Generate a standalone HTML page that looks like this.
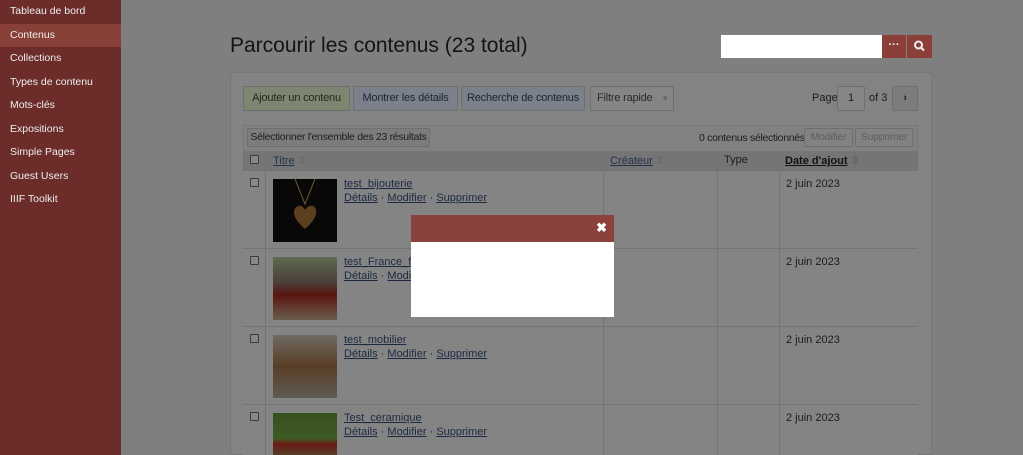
<!DOCTYPE html><html style="width:1023px;height:455px;overflow:hidden"><head><style>
*{margin:0;padding:0;box-sizing:border-box}
body{width:1023px;height:455px;overflow:hidden;background:#7f7f7f;font-family:"Liberation Sans",sans-serif;font-size:11px;color:#1c1c1c;position:relative;white-space:nowrap}
.a{position:absolute}
.side{left:0;top:0;width:121px;height:455px;background:#6b2c2a}
.side div{height:23.5px;line-height:23px;padding-left:10px;color:#eee;font-size:10.5px}
.side .on{background:#894039}
a{color:#1d2a42;text-decoration:underline}
.btn{border:1px solid #6f6f6f;border-radius:2px;line-height:23px;text-align:center;font-size:11px;letter-spacing:-0.2px}
.row{left:243px;width:675px;height:78px;border-top:1px solid #747474;background:#848484;overflow:hidden}
.cb{width:9px;height:9px;border:1px solid #3a3a3a;background:#888;border-radius:1px}
.v{top:0;height:78px;border-left:1px solid #747474}
.th{width:64px;height:63px;top:8px;left:30px}
.t{left:101px;top:6px;font-size:11px;line-height:14px}
</style></head><body>
<div class="a side">
<div>Tableau de bord</div><div class="on">Contenus</div><div>Collections</div><div>Types de contenu</div><div>Mots-clés</div><div>Expositions</div><div>Simple Pages</div><div>Guest Users</div><div>IIIF Toolkit</div>
</div>
<div class="a" style="left:230px;top:34px;font-size:21px;color:#141414">Parcourir les contenus (23 total)</div>
<div class="a" style="left:721px;top:35px;width:161px;height:23px;background:#fff"></div>
<div class="a" style="left:882px;top:35px;width:24px;height:23px;background:#8b3f38;color:#eee;text-align:center;line-height:21px;font-weight:bold">···</div>
<div class="a" style="left:907px;top:35px;width:25px;height:23px;background:#8b3f38"><svg width="25" height="23"><circle cx="11.5" cy="10" r="3.5" stroke="#eee" stroke-width="2" fill="none"/><path d="M14 12.5l3 3" stroke="#eee" stroke-width="2.2"/></svg></div>
<div class="a" style="left:230px;top:72px;width:702px;height:383px;background:#838383;border:1px solid #777"></div>
<div class="a btn" style="left:243px;top:86px;width:107px;height:25px;background:#7e8570;color:#1f2a12">Ajouter un contenu</div>
<div class="a btn" style="left:353px;top:86px;width:105px;height:25px;background:#7b808a;color:#1a2436">Montrer les détails</div>
<div class="a btn" style="left:461px;top:86px;width:124px;height:25px;background:#7b808a;color:#1a2436">Recherche de contenus</div>
<div class="a btn" style="left:590px;top:86px;width:84px;height:25px;background:#858585;text-align:left;padding-left:6px;color:#2a2a2a">Filtre rapide <span style="font-size:8px;color:#666;margin-left:6px">▼</span></div>
<div class="a" style="left:812px;top:92px">Page</div>
<div class="a btn" style="left:837px;top:86px;width:28px;height:25px;background:#868686">1</div>
<div class="a" style="left:869px;top:92px">of 3</div>
<div class="a btn" style="left:892px;top:86px;width:26px;height:25px;background:#7c7c7c;font-weight:bold">›</div>
<div class="a" style="left:243px;top:125px;width:675px;height:330px;border:1px solid #777;background:#818181"></div>
<div class="a btn" style="left:247px;top:128px;width:183px;height:19px;line-height:17px;background:#7c7c7c;font-size:10.5px;letter-spacing:-0.3px">Sélectionner l'ensemble des 23 résultats</div>
<div class="a" style="left:699px;top:132px;font-size:10.5px;letter-spacing:-0.3px">0 contenus sélectionnés</div>
<div class="a btn" style="left:804px;top:128px;width:49px;height:19px;line-height:17px;color:#5e5e5e;background:#828282;font-size:10.5px">Modifier</div>
<div class="a btn" style="left:855px;top:128px;width:58px;height:19px;line-height:17px;color:#5e5e5e;background:#828282;font-size:10.5px">Supprimer</div>
<div class="a" style="left:243px;top:151px;width:675px;height:19px;background:#757575"></div>
<div class="a cb" style="left:250px;top:155px"></div>
<div class="a" style="left:273px;top:154px"><a style="color:#25324d">Titre</a> <span style="color:#666">⇕</span></div>
<div class="a" style="left:610px;top:154px"><a style="color:#25324d">Créateur</a> <span style="color:#666">⇕</span></div>
<div class="a" style="left:724px;top:154px">Type</div>
<div class="a" style="left:785px;top:154px;font-weight:bold"><a style="color:#111">Date d'ajout</a> <span style="color:#666">⇕</span></div>

<div class="a row" style="top:170px"><div class="a cb" style="left:7px;top:7px"></div><div class="a v" style="left:22px"></div><div class="a th" style="background:#0a0806"><svg width="64" height="63"><path d="M22 0L32 25L42 0" stroke="#6b5a3a" fill="none"/><path d="M32 50C20 40 18 30 25 27C29 26 31 29 32 31C33 29 36 26 40 27C46 30 44 40 32 50Z" fill="#5a4020"/></svg></div><div class="a t"><a>test_bijouterie</a><br><a>Détails</a> · <a>Modifier</a> · <a>Supprimer</a></div><div class="a v" style="left:360px"></div><div class="a v" style="left:474px"></div><div class="a v" style="left:536px"></div><div class="a" style="left:543px;top:7px">2 juin 2023</div></div>
<div class="a row" style="top:248px"><div class="a cb" style="left:7px;top:7px"></div><div class="a v" style="left:22px"></div><div class="a th" style="background:linear-gradient(#5d6a52,#4b4038 40%,#5a1410 60%,#6a5e4e)"></div><div class="a t"><a>test_France_fashion</a><br><a>Détails</a> · <a>Modifier</a> · <a>Supprimer</a></div><div class="a v" style="left:360px"></div><div class="a v" style="left:474px"></div><div class="a v" style="left:536px"></div><div class="a" style="left:543px;top:7px">2 juin 2023</div></div>
<div class="a row" style="top:326px"><div class="a cb" style="left:7px;top:7px"></div><div class="a v" style="left:22px"></div><div class="a th" style="background:linear-gradient(#6e6a62,#5a3e26 50%,#5e5a52)"></div><div class="a t"><a>test_mobilier</a><br><a>Détails</a> · <a>Modifier</a> · <a>Supprimer</a></div><div class="a v" style="left:360px"></div><div class="a v" style="left:474px"></div><div class="a v" style="left:536px"></div><div class="a" style="left:543px;top:7px">2 juin 2023</div></div>
<div class="a row" style="top:404px;height:51px"><div class="a cb" style="left:7px;top:7px"></div><div class="a v" style="left:22px"></div><div class="a th" style="background:linear-gradient(#36501e,#3e5a24 60%,#6a1a14 75%,#55402a);height:42px"></div><div class="a t"><a>Test_ceramique</a><br><a>Détails</a> · <a>Modifier</a> · <a>Supprimer</a></div><div class="a v" style="left:360px"></div><div class="a v" style="left:474px"></div><div class="a v" style="left:536px"></div><div class="a" style="left:543px;top:7px">2 juin 2023</div></div>

<div class="a" style="left:411px;top:215px;width:203px;height:27px;background:#8c423c"><span class="a" style="right:7px;top:5px;color:#fff;font-weight:bold;font-size:13px">✖</span></div>
<div class="a" style="left:411px;top:242px;width:203px;height:75px;background:#fff"></div>
</body></html>
